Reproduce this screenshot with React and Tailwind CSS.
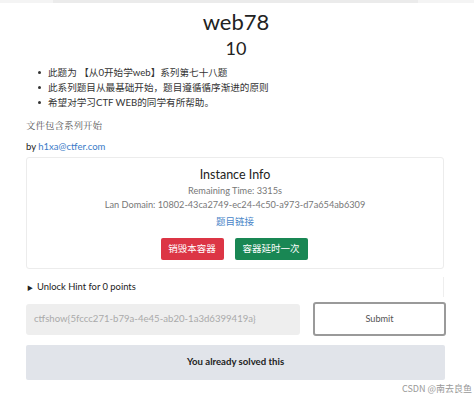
export default function App() {
  const f = { fontFamily: 'Lato, "Noto Sans CJK SC", sans-serif' };
  const bullets = [
    '此题为 【从0开始学web】系列第七十八题',
    '此系列题目从最基础开始，题目遵循循序渐进的原则',
    '希望对学习CTF WEB的同学有所帮助。',
  ];
  return (
    <div className="relative w-[474px] h-[398px] bg-white overflow-hidden text-[#212529]" style={f}>
      <div className="h-[3px] bg-[#f4f4f4] flex justify-center">
        <div className="w-[365px] ml-[-4px] h-[3px] bg-[#ebebeb]" />
      </div>
      <div className="pl-[26px] pr-[28px]">
        <h1 className="text-center text-[22px] leading-[26px] mt-[6px] text-[#222]">web78</h1>
        <h2 className="text-center text-[18px] leading-[22px] mt-[2px] text-[#222]">10</h2>
        <ul className="mt-[6px] text-[9.6px] leading-[15px] text-[#333]">
          {bullets.map((b) => (
            <li key={b} className="flex items-center">
              <span className="w-[3px] h-[3px] rounded-full bg-[#333] ml-[12px] mr-[7px]" />
              <span>{b}</span>
            </li>
          ))}
        </ul>
        <p className="mt-[8px] text-[9.5px] leading-[14px] text-[#555]" style={{ fontFamily: '"Noto Serif CJK SC", "Liberation Serif", "Noto Sans CJK SC", serif' }}>文件包含系列开始</p>
        <p className="mt-[8px] text-[9.5px] leading-[14px] text-[#222]">by <span className="text-[#3a7bc8]">h1xa@ctfer.com</span></p>
        <div className="mt-[3px] mr-[2px] h-[112px] border border-[#ececec] rounded-[3px] flex flex-col items-center pt-[8px]">
          <div className="text-[12.5px] leading-[18px] text-[#222]">Instance Info</div>
          <div className="text-[9.2px] leading-[14px] text-[#777]">Remaining Time: 3315s</div>
          <div className="text-[9.2px] leading-[14px] text-[#777]">Lan Domain: 10802-43ca2749-ec24-4c50-a973-d7a654ab6309</div>
          <div className="text-[9.5px] leading-[14px] text-[#4a86c8] mt-[3px]">题目链接</div>
          <div className="flex gap-[11px] mt-[9px] ml-[-2px]">
            <div className="w-[63px] h-[22px] bg-[#dc3545] rounded-[2px] text-white text-[9.5px] flex items-center justify-center">销毁本容器</div>
            <div className="w-[73px] h-[22px] bg-[#198754] rounded-[2px] text-white text-[9.5px] flex items-center justify-center">容器延时一次</div>
          </div>
        </div>
        <div className="mt-[8px] mr-[2px] flex items-center h-[20px] border-r border-[#eee]">
          <span className="text-[6px] mr-[4px] ml-[1px] text-[#222]">▶</span>
          <span className="text-[9.4px] text-[#222]">Unlock Hint for 0 points</span>
        </div>
        <div className="mt-[7px] flex gap-[13px]">
          <div className="w-[274px] h-[31px] bg-[#eeeeee] rounded-[3px] flex items-center pl-[8px] text-[9.6px] text-[#aaa]">ctfshow{'{'}5fccc271-b79a-4e45-ab20-1a3d6399419a{'}'}</div>
          <div className="w-[133px] h-[34px] mt-[-2px] border-2 border-[#9a9a9a] rounded-[3px] bg-white flex items-center justify-center text-[9.2px] text-[#555]">Submit</div>
        </div>
        <div className="mt-[9px] mr-[1px] h-[35px] bg-[#e1e4ea] rounded-[2px] flex items-center justify-center text-[9.6px] font-bold text-[#222]">You already solved this</div>
      </div>
      <div className="absolute left-[402px] top-[382px] text-[9px] text-[#999]" style={{ fontFamily: '"Noto Sans CJK SC", sans-serif' }}>CSDN @南去良鱼</div>
    </div>
  );
}
